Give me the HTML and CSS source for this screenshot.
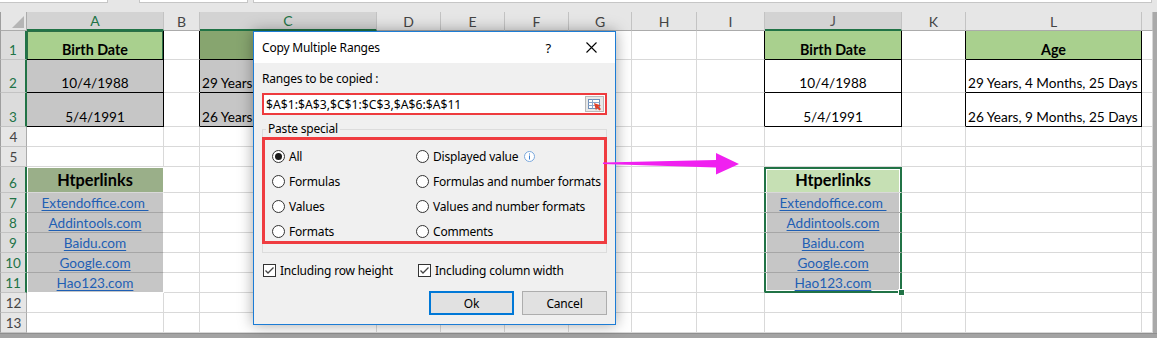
FILE: index.html
```html
<!DOCTYPE html>
<html>
<head>
<meta charset="utf-8">
<link rel="stylesheet" href="styles.css">
</head>
<body>
<div class="app">
  <div class="topbar"><div class="tb tb1"></div><div class="tb tb2"></div><div class="tb tb3"></div></div>
  <div class="main">
    <div class="sheet">
      <div class="row hdr">
        <div class="corner"><span class="tri"></span></div>
        <div class="ch s">A</div><div class="ch">B</div><div class="ch s">C</div><div class="ch">D</div><div class="ch">E</div><div class="ch">F</div><div class="ch">G</div><div class="ch">H</div><div class="ch">I</div><div class="ch s sj">J</div><div class="ch">K</div><div class="ch">L</div><div class="ch"></div>
      </div>
      <div class="row r1">
        <div class="rh s">1</div>
        <div class="c k g1 b act">Birth Date</div><div class="c kr"></div><div class="c k g1d b"></div>
        <div class="c"></div><div class="c"></div><div class="c"></div><div class="c"></div><div class="c"></div><div class="c kr"></div>
        <div class="c k g1 b">Birth Date</div><div class="c kr"></div><div class="c k g1 b">Age</div><div class="c"></div>
      </div>
      <div class="row r2">
        <div class="rh s">2</div>
        <div class="c k gy">10/4/1988</div><div class="c kr"></div><div class="c k gy l"><span class="clip">29 Years, 4 Months, 25 Days</span></div>
        <div class="c"></div><div class="c"></div><div class="c"></div><div class="c"></div><div class="c"></div><div class="c kr"></div>
        <div class="c k">10/4/1988</div><div class="c kr"></div><div class="c k l">29 Years, 4 Months, 25 Days</div><div class="c"></div>
      </div>
      <div class="row r3">
        <div class="rh s">3</div>
        <div class="c k gy">5/4/1991</div><div class="c kr"></div><div class="c k gy l"><span class="clip">26 Years, 9 Months, 25 Days</span></div>
        <div class="c"></div><div class="c"></div><div class="c"></div><div class="c"></div><div class="c"></div><div class="c kr"></div>
        <div class="c k">5/4/1991</div><div class="c kr"></div><div class="c k l">26 Years, 9 Months, 25 Days</div><div class="c"></div>
      </div>
      <div class="row r4">
        <div class="rh">4</div>
        <div class="c"></div><div class="c"></div><div class="c"></div><div class="c"></div><div class="c"></div><div class="c"></div><div class="c"></div><div class="c"></div><div class="c"></div><div class="c"></div><div class="c"></div><div class="c"></div><div class="c"></div>
      </div>
      <div class="row r4">
        <div class="rh">5</div>
        <div class="c"></div><div class="c"></div><div class="c"></div><div class="c"></div><div class="c"></div><div class="c"></div><div class="c"></div><div class="c"></div><div class="c"></div><div class="c"></div><div class="c"></div><div class="c"></div><div class="c"></div>
      </div>
      <div class="row r6">
        <div class="rh s">6</div>
        <div class="c hl hb a6">Htperlinks</div>
        <div class="c"></div><div class="c"></div><div class="c"></div><div class="c"></div><div class="c"></div><div class="c"></div><div class="c"></div><div class="c gr"></div>
        <div class="c hl2 hb j6">Htperlinks</div><div class="c"></div><div class="c"></div><div class="c"></div>
      </div>
      <div class="row r4">
        <div class="rh s">7</div>
        <div class="c gy lc am"><a class="lk">Extendoffice.com&nbsp;</a></div>
        <div class="c"></div><div class="c"></div><div class="c"></div><div class="c"></div><div class="c"></div><div class="c"></div><div class="c"></div><div class="c gr"></div>
        <div class="c gy lc jm"><a class="lk">Extendoffice.com&nbsp;</a></div><div class="c"></div><div class="c"></div><div class="c"></div>
      </div>
      <div class="row r4">
        <div class="rh s">8</div>
        <div class="c gy lc am"><a class="lk">Addintools.com</a></div>
        <div class="c"></div><div class="c"></div><div class="c"></div><div class="c"></div><div class="c"></div><div class="c"></div><div class="c"></div><div class="c gr"></div>
        <div class="c gy lc jm"><a class="lk">Addintools.com</a></div><div class="c"></div><div class="c"></div><div class="c"></div>
      </div>
      <div class="row r4">
        <div class="rh s">9</div>
        <div class="c gy lc am"><a class="lk">Baidu.com</a></div>
        <div class="c"></div><div class="c"></div><div class="c"></div><div class="c"></div><div class="c"></div><div class="c"></div><div class="c"></div><div class="c gr"></div>
        <div class="c gy lc jm"><a class="lk">Baidu.com</a></div><div class="c"></div><div class="c"></div><div class="c"></div>
      </div>
      <div class="row r4">
        <div class="rh s">10</div>
        <div class="c gy lc am"><a class="lk">Google.com</a></div>
        <div class="c"></div><div class="c"></div><div class="c"></div><div class="c"></div><div class="c"></div><div class="c"></div><div class="c"></div><div class="c gr"></div>
        <div class="c gy lc jm"><a class="lk">Google.com</a></div><div class="c"></div><div class="c"></div><div class="c"></div>
      </div>
      <div class="row r4">
        <div class="rh s">11</div>
        <div class="c gy lc a11"><a class="lk">Hao123.com</a></div>
        <div class="c"></div><div class="c"></div><div class="c"></div><div class="c"></div><div class="c"></div><div class="c"></div><div class="c"></div><div class="c gr"></div>
        <div class="c gy lc j11"><a class="lk">Hao123.com</a><span class="handle"></span></div><div class="c"></div><div class="c"></div><div class="c"></div>
      </div>
      <div class="row r4">
        <div class="rh">12</div>
        <div class="c"></div><div class="c"></div><div class="c"></div><div class="c"></div><div class="c"></div><div class="c"></div><div class="c"></div><div class="c"></div><div class="c"></div><div class="c"></div><div class="c"></div><div class="c"></div><div class="c"></div>
      </div>
      <div class="row r4">
        <div class="rh">13</div>
        <div class="c"></div><div class="c"></div><div class="c"></div><div class="c"></div><div class="c"></div><div class="c"></div><div class="c"></div><div class="c"></div><div class="c"></div><div class="c"></div><div class="c"></div><div class="c"></div><div class="c"></div>
      </div>
    </div>
    <div class="vbar"></div>
  </div>
  <div class="hbar"></div>

  <div class="dlg">
    <div class="dtitle">
      <span class="dt">Copy Multiple Ranges</span>
      <span class="q">?</span>
      <svg class="xbtn" width="11" height="11" viewBox="0 0 11 11"><path d="M0.5 0.5L10.5 10.5M10.5 0.5L0.5 10.5" stroke="#000" stroke-width="1.1" fill="none"/></svg>
    </div>
    <div class="dbody">
      <div class="lbl">Ranges to be copied :</div>
      <div class="rng">
        <span class="rtxt">$A$1:$A$3,$C$1:$C$3,$A$6:$A$11</span>
        <svg class="rbtn" width="19" height="16" viewBox="0 0 19 16">
          <rect x="0.5" y="0.5" width="18" height="15" fill="#e8e8e8" stroke="#b9b9b9"/>
          <rect x="3.5" y="3.5" width="11" height="9" fill="#fff" stroke="#6f8fb8"/>
          <path d="M3.5 6.5H14.5M3.5 9.5H14.5M7.5 3.5V12.5" stroke="#8aa6cc" fill="none"/>
          <path d="M9 7L16 9.5L13.5 10.5L16 13L14.5 14.5L12 12L11 14.5Z" fill="#e0412b"/>
        </svg>
      </div>
      <fieldset class="grp">
        <legend>Paste special</legend>
        <div class="opts">
          <div class="opt"><span class="radio on"></span>All</div>
          <div class="opt"><span class="radio"></span>Displayed value
            <svg class="info" width="11" height="11" viewBox="0 0 11 11"><circle cx="5.5" cy="5.5" r="5" fill="#fff" stroke="#7aa8dc"/><rect x="5" y="4.5" width="1" height="4" fill="#3b7fd0"/><rect x="5" y="2.5" width="1" height="1" fill="#3b7fd0"/></svg>
          </div>
          <div class="opt"><span class="radio"></span>Formulas</div>
          <div class="opt"><span class="radio"></span>Formulas and number formats</div>
          <div class="opt"><span class="radio"></span>Values</div>
          <div class="opt"><span class="radio"></span>Values and number formats</div>
          <div class="opt"><span class="radio"></span>Formats</div>
          <div class="opt"><span class="radio"></span>Comments</div>
        </div>
      </fieldset>
      <div class="checks">
        <div class="chk"><svg class="cbox" width="13" height="13" viewBox="0 0 13 13"><rect x="0.5" y="0.5" width="12" height="12" fill="#fff" stroke="#333"/><path d="M2.5 6.5L5 9L10.5 3.5" stroke="#444" stroke-width="1.3" fill="none"/></svg>Including row height</div>
        <div class="chk"><svg class="cbox" width="13" height="13" viewBox="0 0 13 13"><rect x="0.5" y="0.5" width="12" height="12" fill="#fff" stroke="#333"/><path d="M2.5 6.5L5 9L10.5 3.5" stroke="#444" stroke-width="1.3" fill="none"/></svg>Including column width</div>
      </div>
      <div class="btns">
        <button class="btn ok">Ok</button>
        <button class="btn">Cancel</button>
      </div>
    </div>
  </div>

  <svg class="arrow" width="142" height="30" viewBox="0 0 142 30"><polygon points="3,14.5 116,12 116,5 139,16 116,26.5 116,19.5 3,16" fill="#f020f0"/></svg>
</div>
</body>
</html>
```

FILE: styles.css
```css
* { box-sizing: border-box; margin: 0; padding: 0; }
body { width: 1157px; height: 338px; overflow: hidden; background: #fff; font-family: Lato, "Liberation Sans", sans-serif; }
.app { position: relative; width: 1157px; height: 338px; display: flex; flex-direction: column; background: #e6e6e6; }

.topbar { height: 12px; flex: none; display: flex; }
.tb { height: 3px; background: #fff; border-bottom: 1px solid #c6c6c6; border-right: 1px solid #c6c6c6; }
.tb1 { width: 108px; }
.tb2 { width: 109px; margin-left: 31px; border-left: 1px solid #c6c6c6; }
.tb3 { width: 899px; margin-left: 5px; border-left: 1px solid #c6c6c6; }

.main { flex: 1; display: flex; }
.sheet { width: 1153px; background: #fff; }
.vbar { width: 4px; background: #a9a9a9; }
.hbar { height: 5px; flex: none; background: #a3a3a3; border-top: 1px solid #8f8f8f; }

.row { display: grid; grid-template-columns: 27px 137px 36px 177px 64px 64px 64px 63px 65px 68px 137px 64px 176px 11px; }
.hdr { height: 19px; }
.r1 { height: 29px; }
.r2 { height: 33px; }
.r3 { height: 34px; }
.r4 { height: 20px; }
.r6 { height: 26px; }

.corner { background: #e6e6e6; border-right: 1px solid #ababab; border-bottom: 1px solid #ababab; border-left: 1px solid #9e9e9e; display: flex; align-items: flex-end; justify-content: flex-end; padding: 0 2px 2px 0; }
.tri { width: 0; height: 0; border-left: 12px solid transparent; border-bottom: 12px solid #b5b5b5; }

.ch { background: #e6e6e6; border-right: 1px solid #c3c3c3; border-bottom: 1px solid #ababab; display: flex; align-items: center; justify-content: center; font-size: 14px; color: #444; }
.ch.s { background: #d3d3d3; color: #217346; border-bottom: 2px solid #217346; }
.ch.sj { color: #555; }

.rh { background: #e6e6e6; border-left: 1px solid #9e9e9e; border-right: 1px solid #ababab; border-bottom: 1px solid #c3c3c3; display: flex; align-items: flex-end; justify-content: center; font-size: 13.5px; line-height: 16px; color: #444; padding-bottom: 1px; }
.rh.s { background: #dcdcdc; color: #217346; border-right: 2px solid #217346; }

.c { border-right: 1px solid #d9d9d9; border-bottom: 1px solid #d9d9d9; display: flex; align-items: flex-end; justify-content: center; font-size: 13.6px; line-height: 16px; color: #000; white-space: nowrap; overflow: hidden; padding-bottom: 1px; }
.l { justify-content: flex-start; padding-left: 2px; }
.clip { display: block; width: 51px; overflow: hidden; }
.b { font-weight: 700; font-size: 14.3px; }
.hb { font-weight: 700; font-size: 16.3px; line-height: 20px; padding-bottom: 2px; }

.g1 { background: #a9d08e; }
.g1d { background: #87a56f; }
.gy { background: #c6c6c6; }
.hl { background: #9aaf89; }
.hl2 { background: #c6e0b4; }

.lc { border-bottom-color: #a6a6a6; }
.lk { color: #1f5fb4; text-decoration: underline; text-underline-offset: 2px; }

.k { border-right-color: #000; border-bottom-color: #000; }
.kr { border-right-color: #000; }
.act { box-shadow: inset 1px 1px 0 #2d6e47, inset -1px 0 0 #2d6e47; }

.a6 { border-right-color: #fff; box-shadow: inset 1px 1px 0 #fff; }
.am { border-right-color: #fff; box-shadow: inset 1px 0 0 #fff; }
.a11 { border-right-color: #fff; border-bottom-color: #fff; box-shadow: inset 1px 0 0 #fff; }

.gr { border-right-color: #217346; }
.j6 { border-right-color: #217346; box-shadow: inset 0 2px 0 #217346, inset 1px 0 0 #217346, inset -1px 0 0 #217346, inset 0 3px 0 #fff, inset 2px 0 0 #fff, inset -2px 0 0 #fff; }
.jm { border-right-color: #217346; box-shadow: inset 1px 0 0 #217346, inset -1px 0 0 #217346, inset 2px 0 0 #fff, inset -2px 0 0 #fff; }
.j11 { position: relative; overflow: visible; border-right-color: #217346; border-bottom-color: #217346; box-shadow: inset 1px 0 0 #217346, inset -1px -1px 0 #217346, inset 2px 0 0 #fff, inset -2px -2px 0 #fff; }
.handle { position: absolute; right: -4px; bottom: -4px; width: 7px; height: 7px; background: #217346; border: 1px solid #fff; z-index: 2; }

/* dialog */
.dlg { position: absolute; left: 253px; top: 31px; width: 363px; height: 294px; border: 1px solid #1c7cd5; background: #f0f0f0; box-shadow: 0 0 14px rgba(0,0,0,0.35); font-family: "Noto Sans", "Open Sans", sans-serif; font-size: 12px; letter-spacing: -0.2px; color: #000; display: flex; flex-direction: column; z-index: 5; }
.dtitle { height: 31px; background: #fff; display: flex; align-items: center; padding: 0 18px 0 8px; }
.dt { flex: 1; font-size: 12px; }
.q { font-size: 13px; margin-right: 35px; }
.xbtn { display: block; }
.dbody { padding: 8px 8px 9px 8px; display: flex; flex-direction: column; }
.lbl { height: 15px; line-height: 15px; }
.rng { margin-top: 7px; height: 22px; border: 2px solid #ee3b3e; background: #fff; display: flex; align-items: center; padding: 0 1px 0 2px; }
.rtxt { flex: 1; font-size: 12.2px; letter-spacing: 0; }
.rbtn { display: block; }
.grp { margin-top: 6px; border: 1px solid #dcdcdc; padding: 0 0 8px 0; min-width: 0; }
.grp legend { margin-left: 3px; padding: 0 2px; line-height: 16px; height: 16px; }
.opts { margin: 0 -1px; height: 107px; border: 3px solid #ef3c40; display: grid; grid-template-columns: 144px 1fr; grid-auto-rows: 20px; row-gap: 5px; padding: 6px 0 0 7px; }
.opt { display: flex; align-items: center; gap: 4px; white-space: nowrap; }
.radio { width: 13px; height: 13px; border-radius: 50%; border: 1px solid #333; background: #fff; display: flex; align-items: center; justify-content: center; flex: none; }
.radio.on::after { content: ""; width: 7px; height: 7px; border-radius: 50%; background: #1a1a1a; }
.info { margin-left: 2px; }
.checks { margin-top: 7px; height: 20px; display: grid; grid-template-columns: 155px 1fr; padding-left: 1px; }
.chk { display: flex; align-items: center; gap: 4px; white-space: nowrap; }
.cbox { display: block; flex: none; }
.btns { margin-top: 11px; display: flex; justify-content: flex-end; gap: 8px; }
.btn { width: 85px; height: 24px; background: #e1e1e1; border: 1px solid #adadad; font-family: "Noto Sans", "Open Sans", sans-serif; font-size: 12px; letter-spacing: -0.2px; color: #000; }
.btn.ok { border: 2px solid #0078d7; }

.arrow { position: absolute; left: 600px; top: 148px; z-index: 6; }
```
